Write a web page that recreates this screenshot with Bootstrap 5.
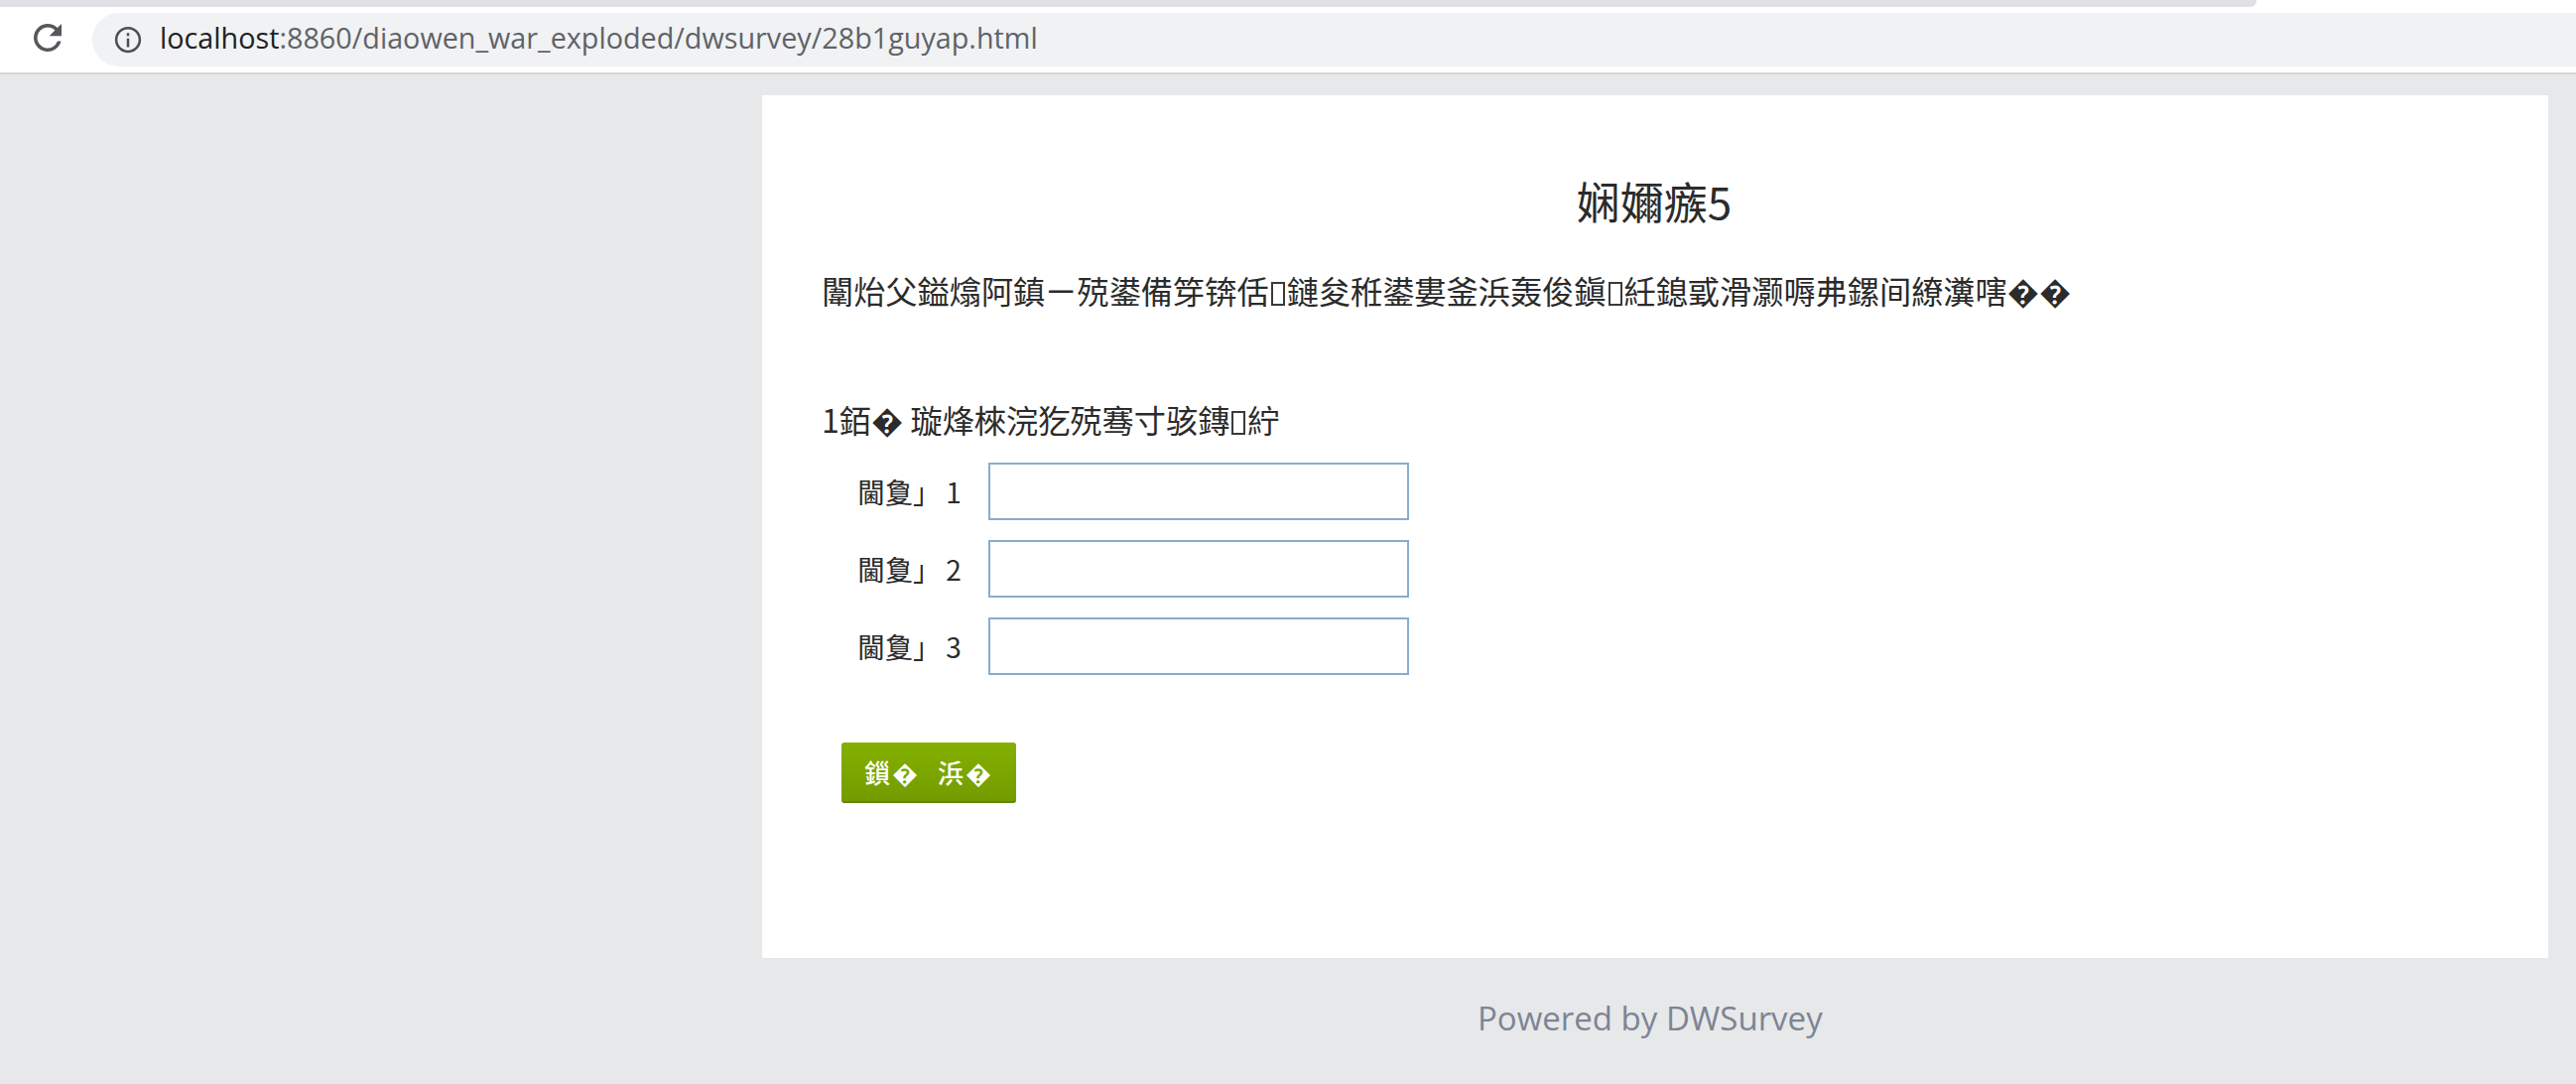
<!DOCTYPE html>
<html lang="zh">
<head>
<meta charset="utf-8">
<title>DWSurvey</title>
<link rel="stylesheet" href="https://cdn.jsdelivr.net/npm/bootstrap@5.3.0/dist/css/bootstrap.min.css">
<style>
html,body{height:100%;}
body{background:#e7e8ea;font-family:"Noto Sans CJK SC","Noto Sans",sans-serif;color:#2b2b2b;overflow:hidden;}
.load-line{height:7px;width:2274px;background:#dfe1e5;border-bottom-right-radius:6px;}
.top-shell{background:#fff;height:75px;border-bottom:2px solid #d5d6d8;}
.tool-row{height:67px;padding-top:6px;}
.reload-btn{width:93px;flex:none;padding-left:3px;}
.addr-bar{height:54px;background:#f1f2f4;border-radius:27px 0 0 27px;padding-left:21px;gap:17px;font-family:"Open Sans","Noto Sans",sans-serif;font-size:28.75px;color:#5f6368;white-space:nowrap;}
.addr-text{margin-top:-4px;}
.addr-host{color:#202124;}
.sheet{width:1800px;height:869px;margin:21px 0 0 768px;background:#fff;padding:0 62px;}
.sheet-title{font-size:44px;font-weight:400;text-align:center;line-height:60px;padding-top:76px;margin:0;height:138px;padding-right:2px;}
.sheet-note{font-size:32.2px;line-height:44px;margin:36px 0 0 -2px;white-space:nowrap;}
.sheet-q{font-size:32.2px;line-height:44px;margin:86px 0 0 -2px;white-space:nowrap;}
.tofu-box{display:inline-block;width:14px;height:24px;border:2px solid #3a3a3a;margin:0 2px;vertical-align:-2px;}
.opt-list{margin-top:22px;gap:20px;padding-left:34px;}
.opt-label{font-size:28px;width:132px;line-height:58px;white-space:nowrap;margin:0;flex:none;word-spacing:-1px;}
.opt-input{width:424px;height:58px;border:2px solid #8aaccb;border-radius:0;}
.send-btn{width:176px;height:61px;margin:68px 0 0 18px;padding:0;border:0;border-radius:3px;background:linear-gradient(#84b000,#739b00);border-bottom:2px solid #638500;color:#fff;font-size:26px;font-weight:500;letter-spacing:2px;word-spacing:10px;}
.foot-note{margin:38px 0 0 1489px;font-family:"Open Sans","Noto Sans",sans-serif;font-size:33px;line-height:46px;color:#7c8593;white-space:nowrap;}
</style>
</head>
<body>
<header class="top-shell">
  <div class="load-line"></div>
  <div class="tool-row d-flex align-items-start">
    <div class="reload-btn d-flex justify-content-center pt-1">
      <svg width="42" height="42" viewBox="0 0 24 24" fill="#55585c" aria-hidden="true"><path d="M17.65 6.35A7.96 7.96 0 0 0 12 4a8 8 0 1 0 7.75 10h-2.09A6 6 0 1 1 12 6c1.66 0 3.14.69 4.22 1.78L13 11h7V4l-2.35 2.35z"/></svg>
    </div>
    <div class="addr-bar flex-grow-1 d-flex align-items-center">
      <svg width="30" height="30" viewBox="0 0 24 24" fill="none" stroke="#4a4d51" stroke-width="2" aria-hidden="true"><circle cx="12" cy="12" r="9.5"/><path d="M12 11v7M12 6.5v2.4"/></svg>
      <span class="addr-text"><span class="addr-host">localhost</span>:8860/diaowen_war_exploded/dwsurvey/28b1guyap.html</span>
    </div>
  </div>
</header>
<main class="sheet">
  <h1 class="sheet-title">娴嬭瘯5</h1>
  <p class="sheet-note">闈炲父鎰熻阿鎮ㄧ殑鍙備笌锛佸<span class="tofu-box"></span>鏈夋秹鍙婁釜浜轰俊鎭<span class="tofu-box"></span>紝鎴戜滑灏嗕弗鏍间繚瀵嗐��</p>
  <p class="sheet-q">1銆� 璇烽棶浣犵殑骞寸骇鏄<span class="tofu-box"></span>紵</p>
  <form>
    <div class="opt-list d-flex flex-column">
      <div class="d-flex"><label class="opt-label">閫夐」 1</label><input class="form-control opt-input" type="text" aria-label="1"></div>
      <div class="d-flex"><label class="opt-label">閫夐」 2</label><input class="form-control opt-input" type="text" aria-label="2"></div>
      <div class="d-flex"><label class="opt-label">閫夐」 3</label><input class="form-control opt-input" type="text" aria-label="3"></div>
    </div>
    <button type="button" class="btn send-btn">鎻� 浜�</button>
  </form>
</main>
<footer class="foot-note">Powered by DWSurvey</footer>
<script src="https://cdn.jsdelivr.net/npm/bootstrap@5.3.0/dist/js/bootstrap.bundle.min.js"></script>
</body>
</html>
